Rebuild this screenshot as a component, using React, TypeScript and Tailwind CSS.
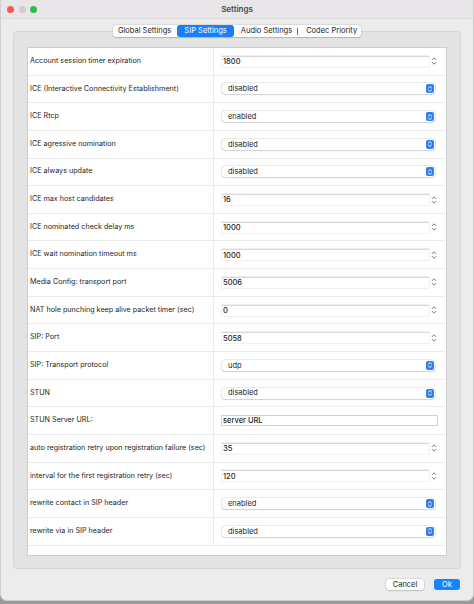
import React from "react";

type Row =
  | { label: string; kind: "spin"; value: string }
  | { label: string; kind: "combo"; value: string }
  | { label: string; kind: "text"; value: string };

const rows: Row[] = [
  { label: "Account session timer expiration", kind: "spin", value: "1800" },
  { label: "ICE (Interactive Connectivity Establishment)", kind: "combo", value: "disabled" },
  { label: "ICE Rtcp", kind: "combo", value: "enabled" },
  { label: "ICE agressive nomination", kind: "combo", value: "disabled" },
  { label: "ICE always update", kind: "combo", value: "disabled" },
  { label: "ICE max host candidates", kind: "spin", value: "16" },
  { label: "ICE nominated check delay ms", kind: "spin", value: "1000" },
  { label: "ICE wait nomination timeout ms", kind: "spin", value: "1000" },
  { label: "Media Config: transport port", kind: "spin", value: "5006" },
  { label: "NAT hole punching keep alive packet timer (sec)", kind: "spin", value: "0" },
  { label: "SIP: Port", kind: "spin", value: "5058" },
  { label: "SIP: Transport protocol", kind: "combo", value: "udp" },
  { label: "STUN", kind: "combo", value: "disabled" },
  { label: "STUN Server URL:", kind: "text", value: "server URL" },
  { label: "auto registration retry upon registration failure (sec)", kind: "spin", value: "35" },
  { label: "interval for the first registration retry (sec)", kind: "spin", value: "120" },
  { label: "rewrite contact in SIP header", kind: "combo", value: "enabled" },
  { label: "rewrite via in SIP header", kind: "combo", value: "disabled" },
];

function SpinArrows() {
  return (
    <svg width="6" height="10" viewBox="0 0 6 10" className="shrink-0">
      <path d="M1.2 3.6 L3 1.8 L4.8 3.6" fill="none" stroke="#6b6b6b" strokeWidth="0.9" strokeLinecap="round" strokeLinejoin="round" />
      <path d="M1.2 6.4 L3 8.2 L4.8 6.4" fill="none" stroke="#6b6b6b" strokeWidth="0.9" strokeLinecap="round" strokeLinejoin="round" />
    </svg>
  );
}

function ComboStepper() {
  return (
    <span className="flex h-[9px] w-[8px] items-center justify-center rounded-[2px] bg-[#2e7cf6]">
      <svg width="6" height="8" viewBox="0 0 6 8">
        <path d="M1.4 3 L3 1.5 L4.6 3" fill="none" stroke="#fff" strokeWidth="0.9" strokeLinecap="round" strokeLinejoin="round" />
        <path d="M1.4 5 L3 6.5 L4.6 5" fill="none" stroke="#fff" strokeWidth="0.9" strokeLinecap="round" strokeLinejoin="round" />
      </svg>
    </span>
  );
}

function ValueCell({ row }: { row: Row }) {
  if (row.kind === "spin") {
    return (
      <div className="flex items-center gap-[2px] pl-[8px] pr-[9px]">
        <div className="flex h-[11px] flex-1 items-center border-t border-[#d8d8d8] bg-white pl-[1px] text-[7.5px] font-medium text-[#1e1e1e] shadow-[0_0_0_0.5px_#e2e2e2]">
          {row.value}
        </div>
        <SpinArrows />
      </div>
    );
  }
  if (row.kind === "combo") {
    return (
      <div className="pl-[8px] pr-[11px]">
        <div className="flex h-[11px] items-center justify-between rounded-[3px] bg-white pl-[6px] pr-[1px] text-[7.5px] text-[#1e1e1e] shadow-[0_0_0_0.5px_rgba(0,0,0,0.12),0_0.5px_1.5px_rgba(0,0,0,0.22)]">
          <span>{row.value}</span>
          <ComboStepper />
        </div>
      </div>
    );
  }
  return (
    <div className="pl-[7px] pr-[8px]">
      <div className="flex h-[11px] items-center border border-[#d2d2d2] bg-white pl-[1px] text-[7.5px] font-medium text-[#1e1e1e]">
        {row.value}
      </div>
    </div>
  );
}

export default function App() {
  const tabs = ["Global Settings", "SIP Settings", "Audio Settings", "Codec Priority"];
  return (
    <div className="h-[604px] w-[474px] bg-[#9a9a9a]" style={{ fontFamily: "Inter, 'Liberation Sans', sans-serif" }}>
      <div className="flex h-[601px] w-[474px] flex-col overflow-hidden rounded-b-[7px] border-x border-b border-[#cfcfcf] bg-[#ececec]">
        {/* title bar */}
        <div className="relative flex h-[19px] shrink-0 items-center justify-center border-b border-[#d9d9d9] bg-[#e8e6e8]">
          <div className="absolute left-[6px] top-[6px] flex gap-[4.5px]">
            <span className="h-[7px] w-[7px] rounded-full bg-[#ee5b55]" />
            <span className="h-[7px] w-[7px] rounded-full bg-[#cfcdcf]" />
            <span className="h-[7px] w-[7px] rounded-full bg-[#2fbe45]" />
          </div>
          <span className="text-[8px] font-semibold text-[#4a4a4a]">Settings</span>
        </div>

        {/* tabs */}
        <div className="relative z-10 mt-[6px] -mb-[6px] flex justify-center">
          <div className="flex h-[12px] items-center rounded-[3px] bg-white pl-[5px] pr-[4px] text-[7.5px] text-[#222] shadow-[0_0_0_0.5px_rgba(0,0,0,0.12),0_0.5px_1px_rgba(0,0,0,0.15)]">
            <span className="pr-[6px]">{tabs[0]}</span>
            <span className="flex h-[12px] items-center rounded-[3px] bg-[#1a7ff5] px-[7px] text-white">{tabs[1]}</span>
            <span className="pl-[7px] pr-[5px]">{tabs[2]}</span>
            <span className="h-[7px] w-[1px] bg-[#3b73d8]" />
            <span className="pl-[8px]">{tabs[3]}</span>
          </div>
        </div>

        {/* group box */}
        <div className="mx-[12px] h-[538px] shrink-0 rounded-[4px] border border-[#d6d6d6] bg-[#e3e3e3] px-[13px] pb-[12px] pt-[15px]">
          <div className="h-full border border-[#cdcdcd] bg-white">
            {rows.map((row) => (
              <div key={row.label} className="grid h-[27.65px] grid-cols-[186px_1fr] items-center border-b border-[#ececec]">
                <div className="flex h-full items-center whitespace-nowrap border-r border-[#ececec] pl-[2px] text-[7.2px] text-[#1e1e1e]">
                  {row.label}
                </div>
                <ValueCell row={row} />
              </div>
            ))}
          </div>
        </div>

        {/* buttons */}
        <div className="flex flex-1 items-center justify-end gap-[10px] pr-[13px]">
          <button className="flex h-[11px] w-[38px] items-center justify-center rounded-[3px] bg-white text-[7.5px] text-[#222] shadow-[0_0_0_0.5px_rgba(0,0,0,0.12),0_0.5px_1.5px_rgba(0,0,0,0.22)]">
            Cancel
          </button>
          <button className="flex h-[11px] w-[26px] items-center justify-center rounded-[3px] bg-[#1a82fb] text-[7.5px] text-white">
            Ok
          </button>
        </div>
      </div>
    </div>
  );
}
